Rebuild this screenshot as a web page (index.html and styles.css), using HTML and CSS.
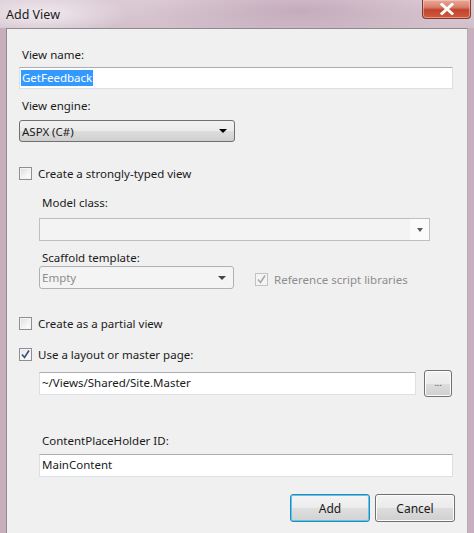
FILE: index.html
```html
<!DOCTYPE html>
<html>
<head>
<meta charset="utf-8">
<link rel="stylesheet" href="styles.css">
</head>
<body>
<div class="window">
  <div class="titlebar">
    <span class="title">Add View</span>
    <div class="close">
      <svg width="16" height="12" viewBox="0 0 16 12"><path d="M3 1.5 L13 10.5 M13 1.5 L3 10.5" stroke="#fff" stroke-width="3" stroke-linecap="square"/></svg>
    </div>
  </div>
  <div class="panel">
    <div class="label l-viewname">View name:</div>
    <div class="textbox tb-name"><span class="sel">GetFeedback</span></div>

    <div class="label l-engine">View engine:</div>
    <div class="select engine">
      <span>ASPX (C#)</span>
      <span class="arrow"></span>
    </div>

    <div class="check-row cr-typed">
      <span class="checkbox"></span>
      <span class="ctext">Create a strongly-typed view</span>
    </div>

    <div class="indent">
      <div class="label l-model">Model class:</div>
      <div class="combo">
        <span class="combo-field"></span>
        <span class="combo-btn"><span class="arrow small"></span></span>
      </div>
      <div class="label l-scaffold">Scaffold template:</div>
      <div class="scaffold-row">
        <div class="select disabled scaffold">
          <span>Empty</span>
          <span class="arrow dim"></span>
        </div>
        <div class="check-row disabled-row">
          <span class="checkbox checked disabled">
            <svg width="11" height="11" viewBox="0 0 11 11"><path d="M2 5.5 L4.5 8.5 L9 1.5" fill="none" stroke="#a9a9a9" stroke-width="1.6"/></svg>
          </span>
          <span class="ctext gray">Reference script libraries</span>
        </div>
      </div>
    </div>

    <div class="check-row cr-partial">
      <span class="checkbox"></span>
      <span class="ctext">Create as a partial view</span>
    </div>

    <div class="check-row cr-layout">
      <span class="checkbox checked">
        <svg width="11" height="11" viewBox="0 0 11 11"><path d="M2 5.5 L4.5 8.5 L9 1.5" fill="none" stroke="#3b4c7a" stroke-width="1.6"/></svg>
      </span>
      <span class="ctext">Use a layout or master page:</span>
    </div>

    <div class="indent">
      <div class="master-row">
        <div class="textbox tb-master">~/Views/Shared/Site.Master</div>
        <div class="button dots">...</div>
      </div>
      <div class="label l-cph">ContentPlaceHolder ID:</div>
      <div class="textbox tb-cph">MainContent</div>
    </div>

    <div class="buttons">
      <div class="button default">Add</div>
      <div class="button">Cancel</div>
    </div>
  </div>
</div>
</body>
</html>
```

FILE: styles.css
```css
html, body {
  margin: 0;
  padding: 0;
}
body {
  width: 474px;
  height: 533px;
  overflow: hidden;
  font-family: "Noto Sans", "Open Sans", sans-serif;
  font-size: 11.5px;
  color: #1a1a1a;
}
.window {
  width: 474px;
  height: 533px;
  background: linear-gradient(90deg, #c6aebd 0%, #cdb7c4 60%, #c7b0be 100%);
  display: flex;
  flex-direction: column;
}
.titlebar {
  height: 28px;
  position: relative;
  background:
    radial-gradient(ellipse 90px 22px at 40px 14px, rgba(242,236,240,0.95), rgba(242,236,240,0) 100%),
    radial-gradient(ellipse 160px 30px at 300px 10px, rgba(180,150,170,0.55), rgba(180,150,170,0) 100%),
    linear-gradient(180deg, #dccbd5 0%, #d2bfca 100%);
  flex: none;
}
.title {
  position: absolute;
  left: 6px;
  top: 6px;
  font-size: 12.5px;
  color: #1a1a1a;
}
.close {
  position: absolute;
  left: 422px;
  top: 0;
  width: 47px;
  height: 18px;
  border: 1px solid #7d3a32;
  border-top: none;
  border-radius: 0 0 4px 4px;
  background: linear-gradient(180deg, #e9a897 0%, #d8806c 40%, #c2432c 55%, #cf5a3e 100%);
  display: flex;
  align-items: center;
  justify-content: center;
  box-shadow: inset 0 0 0 1px rgba(255,210,200,0.5);
}
.panel {
  margin-left: 6px;
  width: 462px;
  flex: 1;
  background: #f0f0f0;
  border-left: 1px solid #8f8a8e;
  border-top: 1px solid #8f8a8e;
  border-right: 1px solid #b9aab3;
  padding-left: 12px;
  box-sizing: border-box;
  display: flex;
  flex-direction: column;
}
.label {
  height: 16px;
  line-height: 16px;
  padding-left: 3px;
  white-space: nowrap;
}
.l-viewname { margin-top: 18px; }
.l-engine { margin-top: 9px; }
.l-model { margin-top: 14px; }
.l-scaffold { margin-top: 9px; line-height: 15px; height: 15px; }
.l-cph { margin-top: 36px; }

.textbox {
  height: 22px;
  box-sizing: border-box;
  background: #fff;
  border: 1px solid #dbe0e6;
  border-top-color: #abadb3;
  line-height: 19px;
  padding-left: 2px;
  white-space: nowrap;
}
.tb-name {
  width: 434px;
  margin-top: 4px;
  padding-left: 1px;
}
.sel {
  background: #3399ff;
  color: #fff;
  display: inline-block;
  line-height: 16px;
  padding: 0 1px;
}
.select {
  height: 22px;
  box-sizing: border-box;
  border: 1px solid #707070;
  border-radius: 3px;
  background: linear-gradient(180deg, #f2f2f2 0%, #ebebeb 50%, #dddddd 51%, #cfcfcf 100%);
  display: flex;
  align-items: center;
  justify-content: space-between;
  padding: 0 7px 0 2px;
}
.engine {
  width: 216px;
  margin-top: 6px;
}
.arrow {
  width: 0;
  height: 0;
  border-left: 4px solid transparent;
  border-right: 4px solid transparent;
  border-top: 4px solid #000;
}
.arrow.small {
  border-left-width: 3.5px;
  border-right-width: 3.5px;
  border-top: 4px solid #5a5a5a;
}
.arrow.dim {
  border-top-color: #444;
}
.check-row {
  display: flex;
  align-items: center;
  height: 16px;
  white-space: nowrap;
}
.cr-typed { margin-top: 23px; }
.cr-partial { margin-top: 26px; }
.cr-layout { margin-top: 15px; }
.checkbox {
  width: 13px;
  height: 13px;
  box-sizing: border-box;
  border: 1px solid #8e8f8f;
  background: linear-gradient(135deg, #dcdcdc 0%, #f4f4f4 60%, #ffffff 100%);
  box-shadow: inset 0 0 0 1px #f4f4f4;
  display: flex;
  align-items: center;
  justify-content: center;
  flex: none;
}
.checkbox.checked {
  background: linear-gradient(135deg, #e3e4ea 0%, #f6f6f8 60%, #ffffff 100%);
}
.checkbox.disabled {
  border-color: #c2c2c2;
  background: #f4f4f4;
}
.ctext {
  margin-left: 6px;
}
.gray {
  color: #8d8d8d;
}
.indent {
  padding-left: 20px;
  display: flex;
  flex-direction: column;
}
.combo {
  width: 391px;
  height: 23px;
  margin-top: 7px;
  box-sizing: border-box;
  border: 1px solid #bfbfbf;
  background: #f3f3f3;
  display: flex;
}
.combo-field {
  flex: 1;
}
.combo-btn {
  width: 19px;
  background: #fbfbfb;
  display: flex;
  align-items: center;
  justify-content: center;
}
.scaffold-row {
  margin-top: 1px;
  display: flex;
  align-items: center;
}
.select.disabled {
  border-color: #adb2b5;
  background: #f4f4f4;
  color: #8d8d8d;
}
.scaffold {
  width: 195px;
  height: 23px;
  padding-left: 2px;
}
.disabled-row {
  margin-left: 21px;
  margin-top: 3px;
}
.master-row {
  margin-top: 8px;
  display: flex;
  align-items: center;
}
.tb-master {
  width: 377px;
  height: 23px;
}
.button {
  box-sizing: border-box;
  border: 1px solid #707070;
  border-radius: 3px;
  background: linear-gradient(180deg, #f2f2f2 0%, #ebebeb 50%, #dddddd 51%, #cfcfcf 100%);
  box-shadow: inset 0 0 0 1px #fcfcfc;
  display: flex;
  align-items: center;
  justify-content: center;
}
.dots {
  width: 28px;
  height: 27px;
  margin-left: 8px;
  font-size: 9px;
  color: #444;
  padding-bottom: 2px;
}
.tb-cph {
  width: 414px;
  margin-top: 5px;
  height: 23px;
}
.buttons {
  margin-top: 17px;
  display: flex;
  gap: 5px;
  padding-left: 271px;
}
.buttons .button {
  width: 80px;
  height: 28px;
  font-size: 12px;
}
.button.default {
  border-color: #3c7fb1;
  box-shadow: inset 0 0 0 1px #48d0f5;
  background: linear-gradient(180deg, #f4f4f4 0%, #ececec 50%, #dfdfdf 51%, #d2d2d2 100%);
}
```
